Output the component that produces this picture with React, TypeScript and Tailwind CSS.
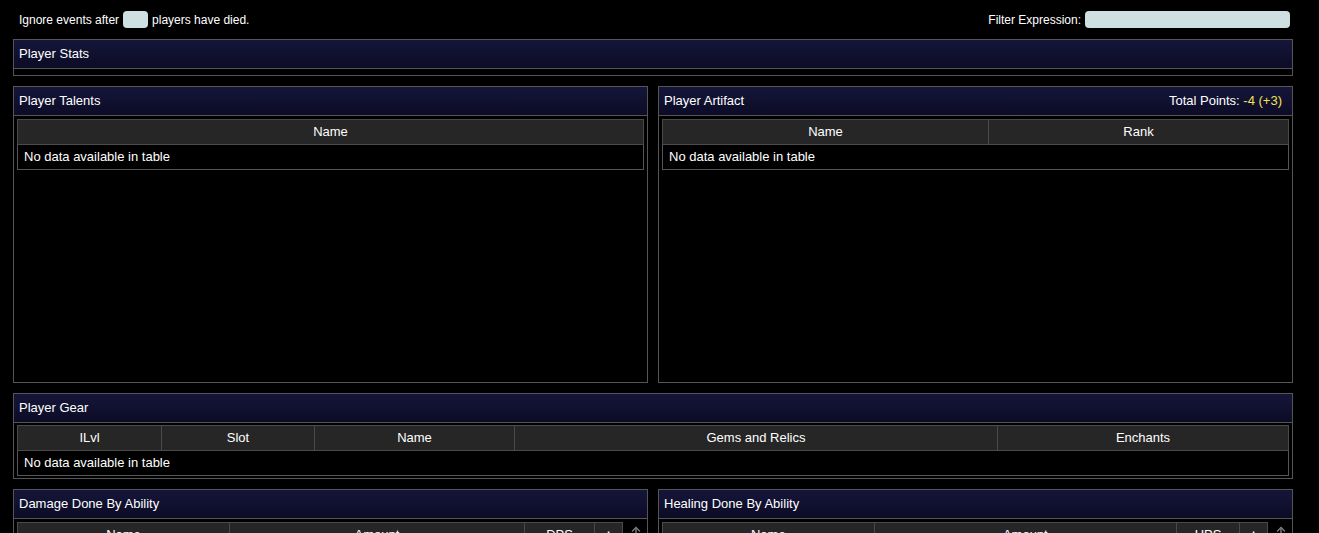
import type { FC, ReactNode } from "react";
import { ArrowUp } from "lucide-react";

const font = { fontFamily: '"Liberation Sans", Arial, sans-serif' };

interface PanelProps {
  title: string;
  right?: ReactNode;
  className?: string;
  children?: ReactNode;
}

const Panel: FC<PanelProps> = ({ title, right, className = "", children }) => (
  <div className={`border border-[#555] ${className}`}>
    <div className="flex h-[29px] items-center justify-between border-b border-[#555] bg-gradient-to-b from-[#15153a] to-[#0c0c26] px-[5px] text-white">
      <span>{title}</span>
      {right}
    </div>
    {children}
  </div>
);

interface Col {
  name: string;
  w?: string;
  bold?: boolean;
}

const DataTable: FC<{ cols: Col[]; empty?: boolean }> = ({ cols, empty = true }) => (
  <table className="w-full border-collapse border border-[#555] text-white">
    <thead>
      <tr className="h-[25px] bg-[#262626]">
        {cols.map((c) => (
          <th
            key={c.name}
            className={`border border-[#4a4a4a] px-2 text-center ${c.bold ? "font-bold" : "font-normal"} ${c.w ?? ""}`}
          >
            {c.name}
          </th>
        ))}
      </tr>
    </thead>
    {empty && (
      <tbody>
        <tr className="h-[25px] bg-black">
          <td colSpan={cols.length} className="px-[6px] text-left">
            No data available in table
          </td>
        </tr>
      </tbody>
    )}
  </table>
);

export default function App() {
  return (
    <div className="min-h-[533px] bg-black text-[13px] text-white" style={font}>
      <div className="w-[1293px] pl-[13px]">
        <div className="flex h-[39px] items-center justify-between pl-[6px] pr-[3px]">
          <div className="flex items-center gap-[4px] text-[12px]">
            <span>Ignore events after</span>
            <span className="h-[17px] w-[25px] rounded-[4px] bg-[#cfe0e3]" />
            <span>players have died.</span>
          </div>
          <div className="flex items-center gap-[4px] text-[12px]">
            <span>Filter Expression:</span>
            <span className="h-[17px] w-[205px] rounded-[4px] bg-[#cfe0e3]" />
          </div>
        </div>

        <div className="flex flex-col gap-[10px]">
          <Panel title="Player Stats">
            <div className="h-[6px]" />
          </Panel>

          <div className="grid grid-cols-2 gap-[10px]">
            <Panel title="Player Talents" className="h-[297px]">
              <div className="px-[3px] pt-[3px]">
                <DataTable cols={[{ name: "Name" }]} />
              </div>
            </Panel>
            <Panel
              title="Player Artifact"
              className="h-[297px]"
              right={
                <span className="pr-[5px]">
                  Total Points: <span className="text-[#f5e050]">-4 (+3)</span>
                </span>
              }
            >
              <div className="px-[3px] pt-[3px]">
                <DataTable cols={[{ name: "Name", w: "w-[326px]" }, { name: "Rank" }]} />
              </div>
            </Panel>
          </div>

          <Panel title="Player Gear">
            <div className="px-[3px] py-[2px]">
              <DataTable
                cols={[
                  { name: "ILvl", w: "w-[144px]" },
                  { name: "Slot", w: "w-[153px]" },
                  { name: "Name", w: "w-[200px]" },
                  { name: "Gems and Relics", w: "w-[483px]" },
                  { name: "Enchants" },
                ]}
              />
            </div>
          </Panel>

          <div className="grid grid-cols-2 gap-[10px]">
            <Panel title="Damage Done By Ability" className="h-[100px]">
              <div className="flex items-start gap-[7px] px-[3px] pt-[3px]">
                <div className="w-[606px]">
                  <DataTable
                    empty={false}
                    cols={[
                      { name: "Name", w: "w-[212px]" },
                      { name: "Amount", w: "w-[295px]" },
                      { name: "DPS", w: "w-[70px]" },
                      { name: "+", w: "w-[28px]", bold: true },
                    ]}
                  />
                </div>
                <ArrowUp strokeWidth={3} className="mt-[3px] h-[12px] w-[12px] text-[#777]" />
              </div>
            </Panel>
            <Panel title="Healing Done By Ability" className="h-[100px]">
              <div className="flex items-start gap-[7px] px-[3px] pt-[3px]">
                <div className="w-[606px]">
                  <DataTable
                    empty={false}
                    cols={[
                      { name: "Name", w: "w-[212px]" },
                      { name: "Amount", w: "w-[303px]" },
                      { name: "HPS", w: "w-[63px]" },
                      { name: "+", w: "w-[28px]", bold: true },
                    ]}
                  />
                </div>
                <ArrowUp strokeWidth={3} className="mt-[3px] h-[12px] w-[12px] text-[#777]" />
              </div>
            </Panel>
          </div>
        </div>
      </div>
    </div>
  );
}
